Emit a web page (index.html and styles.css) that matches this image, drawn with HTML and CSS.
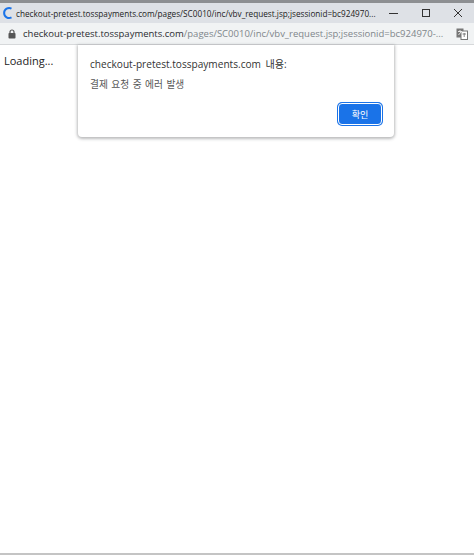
FILE: index.html
```html
<!DOCTYPE html>
<html lang="ko">
<head>
<meta charset="utf-8">
<title>checkout-pretest</title>
<link rel="stylesheet" href="styles.css">
</head>
<body>
<div class="window">
  <div class="top-strip"></div>
  <header class="titlebar">
    <svg class="spinner" width="12" height="14" viewBox="0 0 12 14"><path d="M9.5 2.6A5 5 0 1 0 9.5 11.4" fill="none" stroke="#1a73e8" stroke-width="2"/></svg>
    <span class="title">checkout-pretest.tosspayments.com/pages/SC0010/inc/vbv_request.jsp;jsessionid=bc924970...</span>
    <div class="controls">
      <svg width="10" height="10" viewBox="0 0 10 10"><path d="M0 5.5H9" stroke="#333" stroke-width="1"/></svg>
      <svg width="10" height="10" viewBox="0 0 10 10"><rect x="1.5" y="1.5" width="7" height="7" fill="none" stroke="#333"/></svg>
      <svg width="10" height="10" viewBox="0 0 10 10"><path d="M1 1L9 9M9 1L1 9" stroke="#333" stroke-width="1"/></svg>
    </div>
  </header>
  <div class="addressbar">
    <svg class="lock" width="8" height="10" viewBox="0 0 8 10"><path d="M2 4.5V3a2 2 0 0 1 4 0v1.500" fill="none" stroke="#555" stroke-width="1.200"/><rect x="0.500" y="4" width="7" height="5.500" rx="0.800" fill="#555"/></svg>
    <span class="url"><span class="host">checkout-pretest.tosspayments.com</span>/pages/SC0010/inc/vbv_request.jsp;jsessionid=bc924970-...</span>
    <svg class="translate" width="12" height="12" viewBox="0 0 12 12"><rect x="0.500" y="0.500" width="7" height="9" fill="#777"/><rect x="5" y="3" width="6.500" height="8.500" fill="#fff" stroke="#777"/><path d="M2 3.500H6M4 2V3.500M2.500 7L5 4" stroke="#fff" stroke-width="0.800" fill="none"/><path d="M6.500 6H10M8.200 5V9" stroke="#666" stroke-width="0.800"/></svg>
  </div>
  <main class="content">Loading...</main>
  <div class="bottom-line"></div>
  <div class="dialog" role="alertdialog">
    <div class="dialog-title">checkout-pretest.tosspayments.com 내용:</div>
    <div class="dialog-message">결제 요청 중 에러 발생</div>
    <div class="dialog-actions"><button class="ok">확인</button></div>
  </div>
</div>
</body>
</html>
```
FILE: styles.css
```css
* { box-sizing: border-box; }
html, body { margin: 0; height: 100%; }
body { font-family: "Open Sans", "Noto Sans CJK KR", sans-serif; background: #fff; overflow: hidden; }
.window { position: relative; width: 474px; height: 555px; display: flex; flex-direction: column; }
.top-strip { height: 3px; background: #8d8f92; }
.titlebar { height: 20px; background: #dee1e6; display: flex; align-items: center; padding-left: 2px; }
.spinner { flex: none; margin-right: 2px; }
.title { flex: 1; min-width: 0; font-size: 8.200px; color: #222; white-space: nowrap; }
.controls { flex: none; display: flex; gap: 22px; padding: 0 11px 0 0; align-items: center; }
.addressbar { height: 22px; background: #f1f3f4; display: flex; align-items: center; padding-left: 8px; border-bottom: 1px solid #d6d8da; }
.lock { flex: none; margin-right: 7px; }
.url { flex: 1; min-width: 0; font-size: 9.500px; color: #80868b; white-space: nowrap; }
.host { color: #2a2c30; }
.translate { flex: none; margin-right: 6px; }
.content { flex: 1; padding: 8px 4px; font-size: 11px; line-height: 15px; color: #222; }
.bottom-line { height: 2px; background: #c4c4c4; }
.dialog { position: absolute; left: 78px; top: 45px; width: 316px; height: 92px; background: #fff; border-radius: 0 0 4px 4px; box-shadow: 0 1px 3px 1px rgba(60,64,67,.35); padding: 12px 12px 11px 12px; display: flex; flex-direction: column; }
.dialog-title { font-size: 10.100px; line-height: 15px; color: #333; word-spacing: 2px; }
.dialog-message { font-size: 9.700px; line-height: 13px; margin-top: 6px; color: #555; word-spacing: 1px; }
.dialog-actions { margin-top: auto; display: flex; justify-content: flex-end; }
.ok { width: 44px; height: 22px; margin-bottom: 1px; padding: 0; font: 400 9px "Noto Sans CJK KR", sans-serif; color: #fff; background: #1a73e8; border: 1px solid #fff; border-radius: 4px; box-shadow: 0 0 0 1px #1a73e8; }
```
